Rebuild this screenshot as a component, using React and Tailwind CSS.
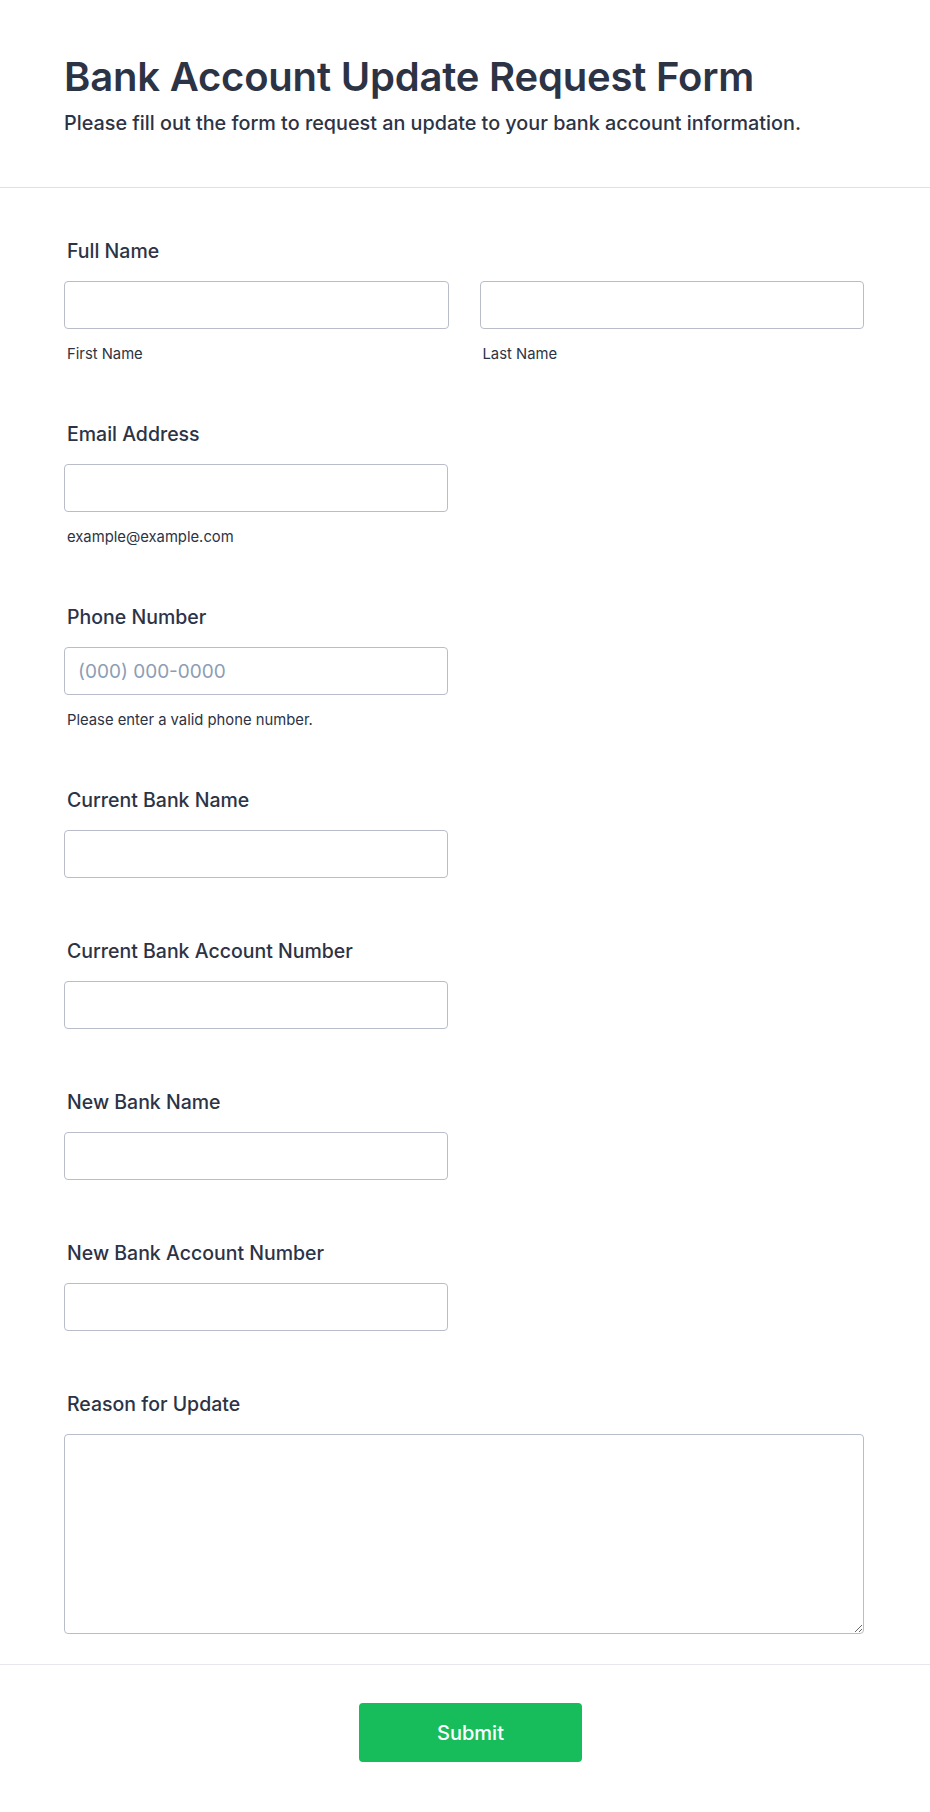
import React from 'react';

// Text field block: label, input and an optional hint under it
function Field({ label, sub, placeholder, type = 'text' }) {
  return (
    <div className={sub ? 'mb-[56px]' : 'mb-[59px]'}>
      <label className="block pl-[3px] text-[19.5px] leading-7 font-medium">{label}</label>
      <input
        type={type}
        placeholder={placeholder}
        className="mt-4 block h-12 w-[384px] rounded-[4px] border border-[#b8bdc9] bg-white px-[13px] text-[19px] text-[#2c3345] outline-none placeholder:text-[#8d9db3]"
      />
      {sub && <p className="mt-[15px] pl-[3px] text-[14.8px] leading-5">{sub}</p>}
    </div>
  );
}

export default function App() {
  return (
    <div className="min-h-screen w-[930px] bg-white font-['Inter',sans-serif] text-[#2c3345]">
      <header className="border-b border-[#dde1e9] px-16 pt-[53px] pb-[50px]">
        <h1 className="text-[40px] leading-[48px] font-semibold tracking-[-0.2px]">
          Bank Account Update Request Form
        </h1>
        <p className="mt-[8px] text-[19.8px] leading-7 font-medium">
          Please fill out the form to request an update to your bank account information.
        </p>
      </header>

      <form className="px-16 pt-[49px]" onSubmit={(e) => e.preventDefault()}>
        {/* Full Name */}
        <div className="mb-[56px]">
          <label className="block pl-[3px] text-[19.5px] leading-7 font-medium">Full Name</label>
          <div className="mt-4 grid w-[800px] grid-cols-2 gap-[31px]">
            <div>
              <input className="block h-12 w-full rounded-[4px] border border-[#b8bdc9] bg-white px-[13px] text-[19px] outline-none" />
              <p className="mt-[15px] pl-[3px] text-[14.8px] leading-5">First Name</p>
            </div>
            <div>
              <input className="block h-12 w-full rounded-[4px] border border-[#b8bdc9] bg-white px-[13px] text-[19px] outline-none" />
              <p className="mt-[15px] pl-[3px] text-[14.8px] leading-5">Last Name</p>
            </div>
          </div>
        </div>

        <Field label="Email Address" sub="example@example.com" type="email" />
        <Field label="Phone Number" sub="Please enter a valid phone number." placeholder="(000) 000-0000" />
        <Field label="Current Bank Name" />
        <Field label="Current Bank Account Number" />
        <Field label="New Bank Name" />
        <Field label="New Bank Account Number" />

        <div className="pb-[30px]">
          <label className="block pl-[3px] text-[19.5px] leading-7 font-medium">Reason for Update</label>
          <textarea className="mt-4 block h-[200px] w-[800px] rounded-[4px] border border-[#b8bdc9] bg-white px-[13px] py-2 text-[19px] outline-none" />
        </div>
      </form>

      <footer className="flex justify-center border-t border-[#e6e8ee] pt-[38px] pb-[49px] pl-[11px]">
        <button className="h-[59px] w-[223px] rounded-[4px] bg-[#18bd5b] text-[20px] font-medium text-white">
          Submit
        </button>
      </footer>
    </div>
  );
}
